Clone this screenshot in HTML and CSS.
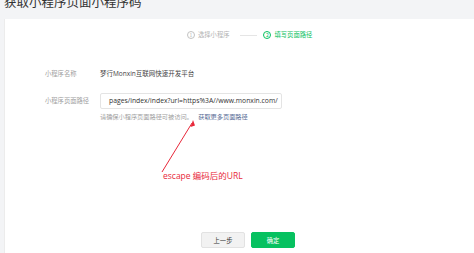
FILE: index.html
```html
<!DOCTYPE html>
<html>
<head>
<meta charset="utf-8">
<link rel="stylesheet" href="styles.css">
</head>
<body>
<div class="page">
  <div class="title">获取小程序页面小程序码</div>
  <div class="card">
    <div class="steps">
      <div class="step"><span class="num">1</span><span class="stxt">选择小程序</span></div>
      <div class="sline"></div>
      <div class="step active"><span class="num">2</span><span class="stxt">填写页面路径</span></div>
    </div>
    <div class="form">
      <div class="row">
        <div class="label">小程序名称</div>
        <div class="value">梦行Monxin互联网快速开发平台</div>
      </div>
      <div class="row row2">
        <div class="label">小程序页面路径</div>
        <div class="field">
          <div class="input">pages/index/index?url=https%3A//www.monxin.com/</div>
          <div class="help">请确保小程序页面路径可被访问。 <a class="link">获取更多页面路径</a></div>
        </div>
      </div>
    </div>
    <div class="buttons">
      <button class="btn btn-default">上一步</button>
      <button class="btn btn-primary">确定</button>
    </div>
    <div class="note">
      <svg class="arrow" width="40" height="56" viewBox="0 0 40 56">
        <line x1="2" y1="54" x2="32" y2="5" stroke="#e8283a" stroke-width="1"/>
        <polygon points="33,2 30.5,9 35,7.5" fill="#e8283a"/>
      </svg>
      <div class="ntext">escape 编码后的URL</div>
    </div>
  </div>
</div>
</body>
</html>
```
FILE: styles.css
```css
* { box-sizing: border-box; }
html, body { margin: 0; padding: 0; }
body {
  width: 474px;
  height: 253px;
  overflow: hidden;
  background: #f3f4f6;
  font-family: "Open Sans", "Noto Sans CJK SC", sans-serif;
}
.page { display: flex; flex-direction: column; height: 253px; }
.title {
  height: 24px;
  margin-top: -5px;
  padding-left: 4px;
  font-size: 12.5px;
  line-height: 14px;
  color: #333;
  font-family: "Noto Sans CJK SC", sans-serif;
  flex: none;
}
.card {
  position: relative;
  flex: 1;
  margin-left: 4px;
  background: #fff;
  border-left: 1px solid #ececec;
}
.steps {
  display: flex;
  align-items: center;
  padding-left: 182px;
  padding-top: 11px;
  height: 21px;
  font-family: "Noto Sans CJK SC", sans-serif;
}
.step { display: flex; align-items: center; color: #b2b2b2; }
.num {
  width: 8px; height: 8px;
  border: 1px solid #c2c2c2;
  border-radius: 50%;
  font-size: 5px;
  line-height: 6px;
  text-align: center;
  margin-right: 3px;
  color: #b2b2b2;
}
.stxt { font-size: 6.3px; line-height: 8px; }
.step.active { color: #07c160; }
.step.active .num { border-color: #07c160; color: #07c160; }
.sline { width: 17px; height: 1px; background: #e5e5e5; margin: 0 6px 0 11px; }
.form { padding-left: 40px; padding-top: 27px; }
.row { display: flex; align-items: center; height: 12px; }
.label {
  width: 55px;
  font-size: 6.3px;
  color: #a0a0a0;
  font-family: "Noto Sans CJK SC", sans-serif;
}
.value { font-size: 6.5px; color: #444; }
.row2 { margin-top: 14px; align-items: flex-start; height: auto; }
.row2 .label { line-height: 16px; }
.field { display: flex; flex-direction: column; }
.input {
  width: 182px;
  height: 16px;
  border: 1px solid #e4e4e4;
  border-radius: 2px;
  padding-left: 8px;
  font-size: 6.8px;
  line-height: 14px;
  color: #333;
  white-space: nowrap;
}
.help {
  margin-top: 3px;
  font-size: 6.2px;
  color: #a0a0a0;
  font-family: "Noto Sans CJK SC", sans-serif;
}
.link { color: #576b95; margin-left: 4px; }
.buttons {
  display: flex;
  gap: 6px;
  padding-left: 196px;
  margin-top: 111px;
}
.btn {
  width: 44px;
  height: 16px;
  border-radius: 2px;
  font-size: 6.3px;
  font-family: "Noto Sans CJK SC", sans-serif;
  padding: 0;
}
.btn-default { background: #f2f2f2; border: 1px solid #e2e2e2; color: #353535; }
.btn-primary { background: #07c160; border: 1px solid #07c160; color: #fff; }
.note { position: absolute; left: 155px; top: 99px; }
.arrow { position: absolute; left: 0; top: 0; }
.ntext {
  position: absolute;
  left: 3px;
  top: 51px;
  white-space: nowrap;
  font-size: 8.5px;
  color: #e8283a;
}
```
